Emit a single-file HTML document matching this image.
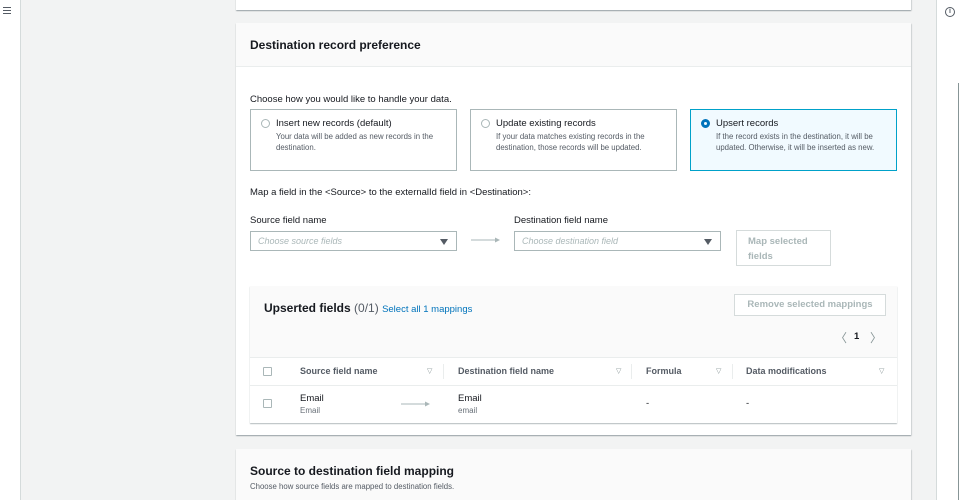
<!DOCTYPE html>
<html style="overflow:hidden;width:960px;height:500px"><head><style>
*{box-sizing:border-box;margin:0;padding:0}
body{width:960px;height:500px;overflow:hidden;background:#f2f3f3;font-family:"Liberation Sans",sans-serif;color:#16191f;position:relative;font-size:9.5px}
.abs{position:absolute}
.card{position:absolute;left:236px;width:675px;background:#fff;box-shadow:0 1px 1px rgba(0,28,36,.3),1px 1px 1px rgba(0,28,36,.1)}
.radio{position:absolute;top:109px;height:62px;width:207px;border:1px solid #aab7b8;background:#fff}
.radio .c{position:absolute;left:10px;top:9px;width:9px;height:9px;border:1px solid #aab7b8;border-radius:50%}
.radio .t{position:absolute;left:25px;top:8px;font-size:9.5px;color:#16191f}
.radio .d{position:absolute;left:25px;top:21px;font-size:7.8px;color:#545b64;line-height:11px;width:178px}
.sel{position:absolute;height:20px;border:1px solid #aab7b8;font-style:italic;color:#aab7b8;font-size:9px;padding:4px 7px}
.sel:after{content:"";position:absolute;right:8px;top:7px;border-left:4px solid transparent;border-right:4px solid transparent;border-top:6px solid #545b64}
.lbl{position:absolute;font-size:9.5px}
.th{position:absolute;top:366px;font-size:9px;font-weight:bold;color:#545b64}
.fi{position:absolute;top:367px;color:#879596;font-size:7px}
.cb{position:absolute;width:9px;height:9px;border:1px solid #aab7b8;border-radius:1px}
</style></head><body>
<div class="abs" style="left:0;top:0;width:21px;height:500px;background:#fff;border-right:1px solid #d5dbdb"></div>
<div class="abs" style="left:3px;top:7px;width:8px;height:1px;background:#545b64;box-shadow:0 3px 0 #545b64,0 6px 0 #545b64"></div>
<div class="abs" style="left:936px;top:0;width:24px;height:500px;background:#fff;border-left:1px solid #d5dbdb"></div>
<div class="abs" style="left:945px;top:7px;width:10px;height:10px;border:1.3px solid #545b64;border-radius:50%;font-size:7px;font-weight:bold;text-align:center;line-height:7px;color:#545b64">i</div>
<div class="abs" style="left:958px;top:83px;width:1px;height:417px;background:#879596"></div>

<div class="card" style="top:-5px;height:15px"></div>

<div class="card" style="top:23px;height:412px">
 <div style="height:44px;background:#fafafa;border-bottom:1px solid #eaeded;padding:15px 14px;font-size:12px;font-weight:bold">Destination record preference</div>
</div>
<div class="lbl" style="left:250px;top:94px">Choose how you would like to handle your data.</div>
<div class="radio" style="left:250px"><div class="c"></div><div class="t">Insert new records (default)</div><div class="d">Your data will be added as new records in the destination.</div></div>
<div class="radio" style="left:470px"><div class="c"></div><div class="t">Update existing records</div><div class="d">If your data matches existing records in the destination, those records will be updated.</div></div>
<div class="radio" style="left:690px;background:#f1faff;border-color:#00a1c9"><div class="c" style="border:3px solid #0073bb"></div><div class="t">Upsert records</div><div class="d">If the record exists in the destination, it will be updated. Otherwise, it will be inserted as new.</div></div>
<div class="lbl" style="left:250px;top:187px">Map a field in the &lt;Source&gt; to the externalId field in &lt;Destination&gt;:</div>
<div class="lbl" style="left:250px;top:215px">Source field name</div>
<div class="lbl" style="left:514px;top:215px">Destination field name</div>
<div class="sel" style="left:250px;top:231px;width:207px">Choose source fields</div>
<div class="sel" style="left:514px;top:231px;width:207px">Choose destination field</div>
<svg class="abs" style="left:471px;top:236px" width="30" height="8"><line x1="0" y1="4" x2="25" y2="4" stroke="#aab7b8"/><path d="M24 1.5L29 4L24 6.5Z" fill="#aab7b8"/></svg>
<div class="abs" style="left:736px;top:230px;width:95px;height:36px;border:1px solid #d5dbdb;color:#aab7b8;font-weight:bold;font-size:9.5px;padding:3px 11px;line-height:15px">Map selected fields</div>

<div class="abs" style="left:250px;top:286px;width:647px;height:137px;background:#fafafa;box-shadow:0 1px 1px rgba(0,28,36,.3)"></div>
<div class="abs" style="left:250px;top:357px;width:647px;height:66px;background:#fff;border-top:1px solid #eaeded"></div>
<div class="abs" style="left:250px;top:385px;width:647px;height:1px;background:#eaeded"></div>
<div class="abs" style="left:264px;top:301px;font-size:12px;font-weight:bold">Upserted fields <span style="font-weight:normal;color:#545b64">(0/1)</span> <span style="font-weight:normal;color:#0073bb;font-size:9.5px">Select all 1 mappings</span></div>
<div class="abs" style="left:734px;top:294px;width:152px;height:22px;border:1px solid #d5dbdb;background:#fff;color:#aab7b8;font-weight:bold;text-align:center;line-height:20px">Remove selected mappings</div>
<div class="abs" style="left:835px;top:329px;color:#879596;font-size:12px">〈</div>
<div class="abs" style="left:854px;top:331px;font-weight:bold">1</div>
<div class="abs" style="left:870px;top:329px;color:#879596;font-size:12px">〉</div>
<div class="cb" style="left:263px;top:367px"></div>
<div class="th" style="left:300px">Source field name</div><div class="fi" style="left:427px">▽</div>
<div class="abs" style="left:443px;top:364px;width:1px;height:15px;background:#eaeded"></div>
<div class="th" style="left:458px">Destination field name</div><div class="fi" style="left:616px">▽</div>
<div class="abs" style="left:631px;top:364px;width:1px;height:15px;background:#eaeded"></div>
<div class="th" style="left:646px">Formula</div><div class="fi" style="left:716px">▽</div>
<div class="abs" style="left:732px;top:364px;width:1px;height:15px;background:#eaeded"></div>
<div class="th" style="left:746px">Data modifications</div><div class="fi" style="left:879px">▽</div>
<div class="cb" style="left:263px;top:399px"></div>
<div class="abs" style="left:300px;top:393px;font-size:9.5px">Email</div>
<div class="abs" style="left:300px;top:406px;font-size:8px;color:#687078">Email</div>
<svg class="abs" style="left:401px;top:400px" width="30" height="8"><line x1="0" y1="4" x2="25" y2="4" stroke="#aab7b8"/><path d="M24 1.5L29 4L24 6.5Z" fill="#aab7b8"/></svg>
<div class="abs" style="left:458px;top:393px;font-size:9.5px">Email</div>
<div class="abs" style="left:458px;top:406px;font-size:8px;color:#687078">email</div>
<div class="abs" style="left:646px;top:398px">-</div>
<div class="abs" style="left:746px;top:398px">-</div>

<div class="card" style="top:449px;height:51px;background:#fafafa">
 <div style="padding:15px 14px 0;font-size:12px;font-weight:bold">Source to destination field mapping</div>
 <div style="padding:4px 14px;font-size:7.8px;color:#545b64">Choose how source fields are mapped to destination fields.</div>
</div>
</body></html>
